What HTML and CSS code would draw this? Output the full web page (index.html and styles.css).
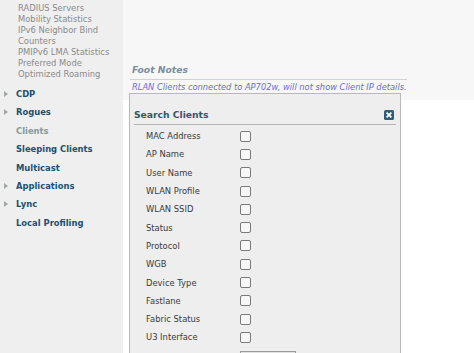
FILE: index.html
```html
<!DOCTYPE html>
<html lang="en">
<head>
  <meta charset="UTF-8">
  <title>Clients</title>
  <link rel="stylesheet" href="styles.css">
</head>
<body>
  <div class="page">

    <!-- Left navigation -->
    <div class="sidebar">
      <ul class="subnav">
        <li>RADIUS Servers</li>
        <li>Mobility Statistics</li>
        <li>IPv6 Neighbor Bind Counters</li>
        <li>PMIPv6 LMA Statistics</li>
        <li>Preferred Mode</li>
        <li>Optimized Roaming</li>
      </ul>
      <ul class="nav">
        <li class="arrow">CDP</li>
        <li class="arrow">Rogues</li>
        <li class="current">Clients</li>
        <li>Sleeping Clients</li>
        <li>Multicast</li>
        <li class="arrow">Applications</li>
        <li class="arrow">Lync</li>
        <li>Local Profiling</li>
      </ul>
    </div>

    <div class="content">
      <div class="notes">
        <div class="notes-title">Foot Notes</div>
        <div class="notes-text">RLAN Clients connected to AP702w, will not show Client IP details.</div>
      </div>

      <!-- Search popup -->
      <div class="dialog">
        <div class="dialog-head">
          <span>Search Clients</span>
          <span class="close">
            <svg width="10" height="10" viewBox="0 0 10 10">
              <rect x="0" y="0" width="10" height="10" rx="1.5" fill="#2f5f78"/>
              <path d="M2.6 2.6 L7.4 7.4 M7.4 2.6 L2.6 7.4" stroke="#fff" stroke-width="1.7"/>
            </svg>
          </span>
        </div>
        <div class="fields">
          <label class="field"><span>MAC Address</span><i class="box"></i></label>
          <label class="field"><span>AP Name</span><i class="box"></i></label>
          <label class="field"><span>User Name</span><i class="box"></i></label>
          <label class="field"><span>WLAN Profile</span><i class="box"></i></label>
          <label class="field"><span>WLAN SSID</span><i class="box"></i></label>
          <label class="field"><span>Status</span><i class="box"></i></label>
          <label class="field"><span>Protocol</span><i class="box"></i></label>
          <label class="field"><span>WGB</span><i class="box"></i></label>
          <label class="field"><span>Device Type</span><i class="box"></i></label>
          <label class="field"><span>Fastlane</span><i class="box"></i></label>
          <label class="field"><span>Fabric Status</span><i class="box"></i></label>
          <label class="field"><span>U3 Interface</span><i class="box"></i></label>
        </div>
        <div class="actions"><button class="apply">Apply</button></div>
      </div>
    </div>

  </div>
</body>
</html>
```

FILE: styles.css
```css
body {
  margin: 0;
  font-family: "DejaVu Sans", Verdana, sans-serif;
  background-color: #fff;
  overflow: hidden;
}

.page {
  display: flex;
  height: 353px;
  overflow: hidden;
}

/* Left navigation */
.sidebar {
  width: 123px;
  background-color: #efefef;
  flex-shrink: 0;
}

.subnav {
  list-style: none;
  margin: 0;
  padding: 3px 2px 0 18px;
  font-size: 8.4px;
  line-height: 11px;
  color: #8a8a8a;
}

.nav {
  list-style: none;
  margin: 5px 0 0;
  padding: 0 0 0 16px;
  font-size: 8.4px;
  font-weight: bold;
  line-height: 18.4px;
  color: #1d4f6f;
}

.nav li {
  position: relative;
}

.nav .current {
  color: #86999e;
}

.nav .arrow::before {
  content: "";
  position: absolute;
  left: -12px;
  top: 6px;
  border-left: 4px solid #a2a8a8;
  border-top: 3.5px solid transparent;
  border-bottom: 3.5px solid transparent;
}

/* Main area */
.content {
  flex: 1;
  position: relative;
}

.notes {
  background-color: #f7f7f8;
  height: 100px;
  padding: 0 0 0 7px;
  box-sizing: border-box;
  display: flex;
  flex-direction: column;
  justify-content: flex-end;
}

.notes-title {
  width: 275px;
  font-size: 9.2px;
  line-height: 11px;
  font-weight: bold;
  font-style: italic;
  color: #7b8e9c;
  padding: 0 0 4px 2px;
  border-bottom: 1px solid #cfd3d8;
}

.notes-text {
  font-size: 8.3px;
  line-height: 10px;
  font-style: italic;
  color: #6d6dd6;
  padding: 2px 0 8px 2px;
  white-space: nowrap;
}

.dialog {
  position: absolute;
  left: 6px;
  top: 93px;
  width: 272px;
  height: 300px;
  background-color: #eeeeee;
  border: 1px solid #b9b9b9;
  box-sizing: border-box;
  padding: 0 4px;
}

.dialog-head {
  display: flex;
  justify-content: space-between;
  align-items: center;
  padding: 15px 2px 4px 0;
  font-size: 9.2px;
  line-height: 11px;
  font-weight: bold;
  color: #2c5a6c;
  border-bottom: 1px solid #b5b5b5;
}

.close svg {
  display: block;
}

.fields {
  padding: 2px 0 0 12px;
}

.field {
  display: flex;
  align-items: center;
  height: 18.3px;
  font-size: 8.4px;
  color: #3a3a3a;
}

.field span {
  width: 94px;
}

.box {
  width: 9px;
  height: 9px;
  border: 1px solid #7a7a7a;
  border-radius: 2px;
  background-color: #f7f7f7;
}

.actions {
  padding: 1px 0 0 106px;
}

.apply {
  width: 56px;
  height: 18px;
  font-size: 8px;
  border: 1px solid #9a9a9a;
  background-color: #e2e2e2;
}
```
